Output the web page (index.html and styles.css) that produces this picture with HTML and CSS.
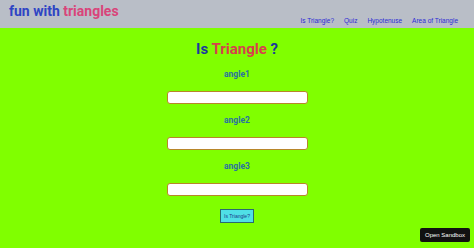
FILE: index.html
```html
<html>
  <head>
    <meta charset="utf-8" />
    <link rel="stylesheet" href="styles.css">
  </head>
  <body>
    <header class="topBar">
      <h1 class="topBar__title">fun with <span class="topBar__accent">triangles</span></h1>
      <nav class="topBar__nav">
        <a class="topBar__link" href="#">Is Triangle?</a>
        <a class="topBar__link" href="#">Quiz</a>
        <a class="topBar__link" href="#">Hypotenuse</a>
        <a class="topBar__link" href="#">Area of Triangle</a>
      </nav>
    </header>
    <main class="checker">
      <h2 class="checker__title">Is <span class="checker__accent">Triangle</span> ?</h2>
      <label class="checker__label" for="angle1">angle1</label>
      <input class="checker__input" id="angle1" type="number">
      <label class="checker__label" for="angle2">angle2</label>
      <input class="checker__input" id="angle2" type="number">
      <label class="checker__label" for="angle3">angle3</label>
      <input class="checker__input" id="angle3" type="number">
      <button class="checker__button" type="button">Is Triangle?</button>
    </main>
    <a class="sandboxButton" href="#">Open Sandbox</a>
  </body>
</html>
```

FILE: styles.css
```css
body {
  margin: 0;
  height: 248px;
  background-color: #80ff00;
  font-family: Roboto, "Liberation Sans", sans-serif;
  overflow: hidden;
}

.topBar {
  display: flex;
  justify-content: space-between;
  align-items: flex-start;
  height: 28px;
  background-color: #b9bec7;
}

.topBar__title {
  margin: 0;
  padding: 3px 0 0 9px;
  font-size: 14px;
  font-weight: 700;
  color: #2e44c4;
}

.topBar__accent {
  color: #d9447a;
}

.topBar__nav {
  display: flex;
  gap: 10px;
  padding: 17px 16px 0 0;
}

.topBar__link {
  font-family: "Liberation Sans", sans-serif;
  font-size: 6.5px;
  color: #2d2bd6;
  text-decoration: none;
}

.checker {
  display: flex;
  flex-direction: column;
  align-items: center;
}

.checker__title {
  margin: 12px 0 0;
  font-size: 15px;
  font-weight: 700;
  color: #1b3a9c;
}

.checker__accent {
  color: #d7404c;
}

.checker__label {
  margin-top: 11px;
  font-size: 8.5px;
  font-weight: 700;
  color: #2a72a0;
}

.checker__input {
  box-sizing: border-box;
  width: 141px;
  height: 13px;
  margin-top: 12px;
  border: 1px solid #b8862a;
  border-radius: 3px;
  background-color: #fff;
  outline: none;
}

.checker__button {
  box-sizing: border-box;
  width: 34px;
  height: 14px;
  margin-top: 13px;
  padding: 0;
  border: 1px solid #2a6a70;
  background-color: #4fe0e6;
  font-family: "Liberation Sans", sans-serif;
  font-size: 5px;
  color: #1b3a8a;
}

.sandboxButton {
  position: absolute;
  right: 4px;
  bottom: 6px;
  padding: 4px 5px;
  border-radius: 2px;
  background-color: #111;
  font-family: "Liberation Sans", sans-serif;
  font-size: 6px;
  color: #fff;
  text-decoration: none;
}
```
